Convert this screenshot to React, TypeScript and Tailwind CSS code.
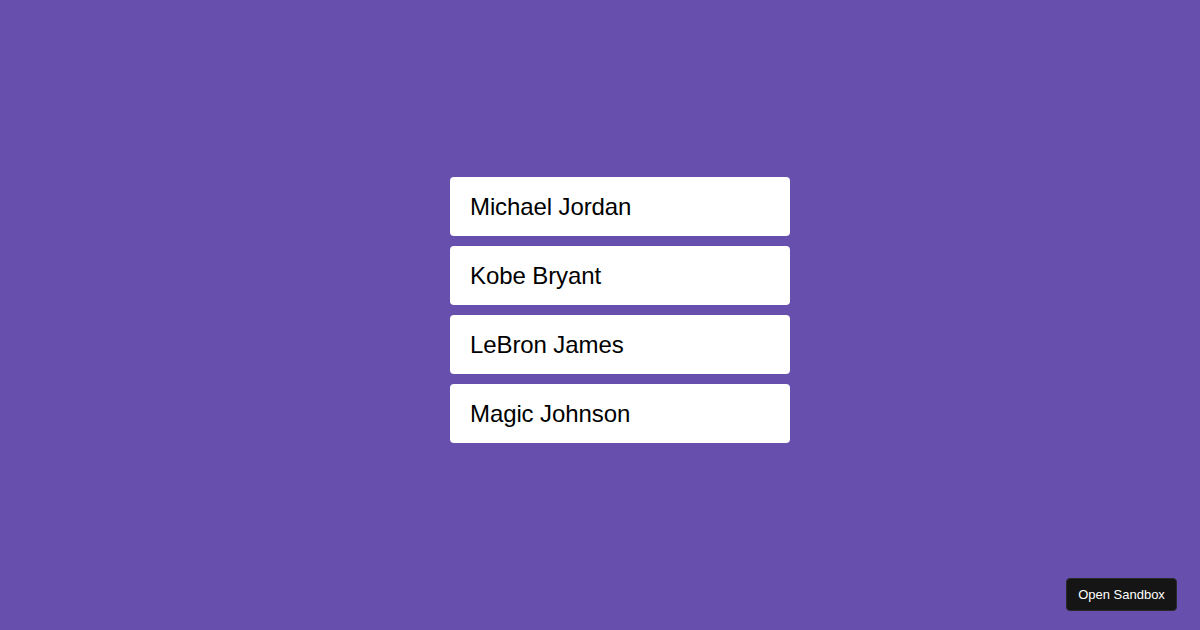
const players = ["Michael Jordan", "Kobe Bryant", "LeBron James", "Magic Johnson"];

export default function App() {
  return (
    <div className="relative flex h-[630px] w-[1200px] items-center justify-center bg-[#674fad] font-['Liberation_Sans',Arial,sans-serif]">
      <ul className="flex w-[380px] flex-col pl-[40px]">
        {players.map((name) => (
          <li
            key={name}
            className="mb-[10px] flex h-[59px] items-center rounded-[4px] bg-white px-[20px] text-[24px] tracking-[-0.1px] text-black"
          >
            {name}
          </li>
        ))}
      </ul>
      <button className="absolute bottom-[19px] right-[23px] flex h-[33px] w-[111px] items-center justify-center rounded-[4px] border border-[#2a2a2a] bg-[#151515] text-[13px] text-white">
        Open Sandbox
      </button>
    </div>
  );
}
